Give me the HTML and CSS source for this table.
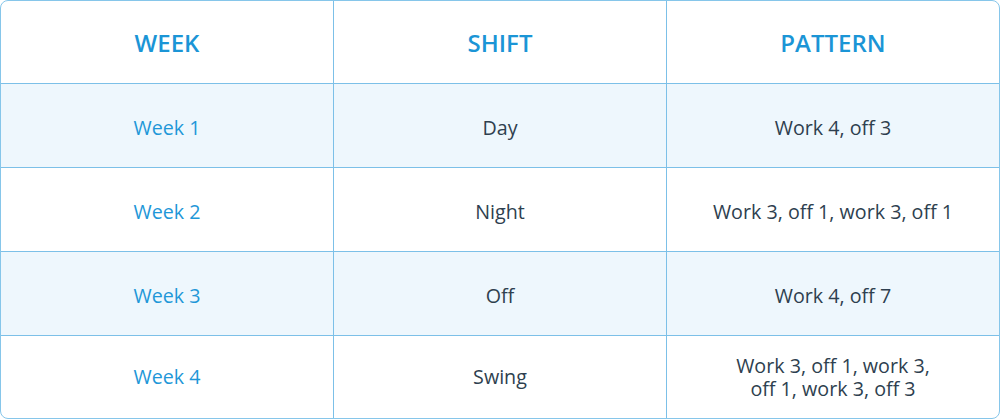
FILE: index.html
```html
<!DOCTYPE html>
<html>
<head>
<meta charset="utf-8">
<link rel="stylesheet" href="styles.css">
</head>
<body>
<div class="table">
  <div class="cell head">WEEK</div>
  <div class="cell head">SHIFT</div>
  <div class="cell head last-col">PATTERN</div>

  <div class="cell alt week">Week 1</div>
  <div class="cell alt">Day</div>
  <div class="cell alt last-col">Work 4, off 3</div>

  <div class="cell week">Week 2</div>
  <div class="cell">Night</div>
  <div class="cell last-col">Work 3, off 1, work 3, off 1</div>

  <div class="cell alt week">Week 3</div>
  <div class="cell alt">Off</div>
  <div class="cell alt last-col">Work 4, off 7</div>

  <div class="cell week last-row">Week 4</div>
  <div class="cell last-row">Swing</div>
  <div class="cell last-row last-col">Work 3, off 1, work 3,<br>off 1, work 3, off 3</div>
</div>
</body>
</html>
```

FILE: styles.css
```css
html, body {
  margin: 0;
  padding: 0;
  background: #ffffff;
}

.table {
  width: 1000px;
  height: 419px;
  box-sizing: border-box;
  border: 1px solid #86c6ea;
  border-radius: 8px;
  overflow: hidden;
  display: grid;
  grid-template-columns: 333px 333px 332px;
  grid-template-rows: 83px 84px 84px 84px 82px;
  font-family: "Open Sans", "Noto Sans", sans-serif;
}

.cell {
  display: flex;
  align-items: center;
  justify-content: center;
  text-align: center;
  box-sizing: border-box;
  padding-top: 4px;
  border-right: 1px solid #7cc0e8;
  border-bottom: 1px solid #7cc0e8;
  font-size: 19.7px;
  line-height: 23.5px;
  color: #2e3f4f;
}

.cell.last-col {
  border-right: none;
}

.cell.last-row {
  border-bottom: none;
  padding-top: 0;
}

.cell.alt {
  background: #eef7fd;
}

.cell.head {
  font-size: 24px;
  font-weight: 600;
  color: #1b95d6;
  padding-top: 1px;
}

.cell.week {
  color: #1f97d8;
}
```
